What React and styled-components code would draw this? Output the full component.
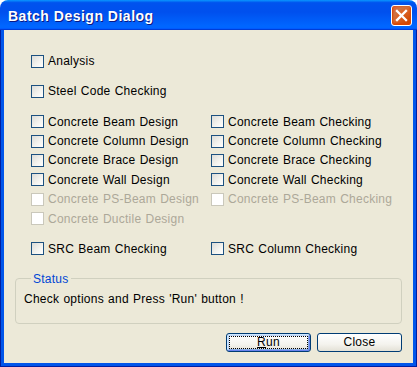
import React from "react";
import styled, { createGlobalStyle } from "styled-components";

const GlobalStyle = createGlobalStyle`
  html, body {
    margin: 0;
    padding: 0;
    background: #ffffff;
  }
  * {
    box-sizing: border-box;
  }
`;

// left and right columns of the concrete group
const designItems = [
  { label: "Concrete Beam Design" },
  { label: "Concrete Column Design" },
  { label: "Concrete Brace Design" },
  { label: "Concrete Wall Design" },
  { label: "Concrete PS-Beam Design", disabled: true },
  { label: "Concrete Ductile Design", disabled: true },
];

const checkItems = [
  { label: "Concrete Beam Checking" },
  { label: "Concrete Column Checking" },
  { label: "Concrete Brace Checking" },
  { label: "Concrete Wall Checking" },
  { label: "Concrete PS-Beam Checking", disabled: true },
];

const CheckRow = ({ label, disabled, height }) => (
  <Row $height={height} $disabled={disabled}>
    <Box $disabled={disabled} />
    <span>{label}</span>
  </Row>
);

const App = () => {
  return (
    <>
      <GlobalStyle />
      <Window>
        <TitleBar>
          <Title>Batch Design Dialog</Title>
          <CloseButton aria-label='close'>
            <svg width='15' height='15' viewBox='0 0 15 15'>
              <path
                d='M3 3 L12 12 M12 3 L3 12'
                stroke='#ffffff'
                strokeWidth='2.3'
                strokeLinecap='square'
              />
            </svg>
          </CloseButton>
        </TitleBar>
        <Frame>
          <Panel>
            <Checks>
              <CheckRow label='Analysis' />
              <Spacer $h={10} />
              <CheckRow label='Steel Code Checking' />
              <Spacer $h={11} />
              <ConcreteGrid>
                <Column>
                  {designItems.map((item, index) => (
                    <CheckRow key={index} {...item} height={19.4} />
                  ))}
                </Column>
                <Column>
                  {checkItems.map((item, index) => (
                    <CheckRow key={index} {...item} height={19.4} />
                  ))}
                </Column>
              </ConcreteGrid>
              <Spacer $h={10.6} />
              <ConcreteGrid>
                <CheckRow label='SRC Beam Checking' />
                <CheckRow label='SRC Column Checking' />
              </ConcreteGrid>
            </Checks>
            <StatusGroup>
              <legend>Status</legend>
              <StatusText>Check options and Press 'Run' button !</StatusText>
            </StatusGroup>
            <ButtonBar>
              <PushButton $focused>
                <span>
                  <u>R</u>un
                </span>
              </PushButton>
              <PushButton>
                <span>Close</span>
              </PushButton>
            </ButtonBar>
          </Panel>
        </Frame>
      </Window>
    </>
  );
};

export default App;

const Window = styled.div`
  width: 417px;
  height: 367px;
  display: flex;
  flex-direction: column;
  border-radius: 8px 8px 0 0;
  overflow: hidden;
  font-family: "Liberation Sans", Arial, sans-serif;
`;

const TitleBar = styled.div`
  height: 30px;
  flex: none;
  display: flex;
  align-items: center;
  justify-content: space-between;
  padding: 0 5px 0 8px;
  background: linear-gradient(
    180deg,
    #0997ff 0%,
    #0053ee 9%,
    #0050ee 40%,
    #0066ff 86%,
    #0066ff 92%,
    #005bff 95%,
    #003dd7 97%,
    #003dd7 100%
  );
`;

const Title = styled.div`
  color: #ffffff;
  font-weight: bold;
  font-size: 14px;
  letter-spacing: 0.5px;
  text-shadow: 1px 1px #0a1883;
  padding-top: 1px;
`;

const CloseButton = styled.div`
  width: 21px;
  height: 21px;
  border: 1px solid #ffffff;
  border-radius: 3px;
  display: flex;
  align-items: center;
  justify-content: center;
  background: radial-gradient(
    circle at 90% 90%,
    #cc4600 0%,
    #dc6527 55%,
    #cd7546 70%,
    #e35a34 100%
  );
  box-shadow: inset 0 -1px 2px 1px #da4600;
`;

const Frame = styled.div`
  flex: 1;
  display: flex;
  padding: 0 4px 4px;
  background: #0055ea;
  box-shadow: inset 1px 0 #001ea0, inset -1px 0 #001ea0, inset 0 -1px #001ea0;
`;

const Panel = styled.div`
  flex: 1;
  display: flex;
  flex-direction: column;
  background: #ece9d8;
  font-size: 12px;
  letter-spacing: 0.25px;
  word-spacing: 0.6px;
`;

const Checks = styled.div`
  padding: 21px 0 0 27px;
  display: flex;
  flex-direction: column;
`;

const Spacer = styled.div`
  height: ${(p) => p.$h}px;
`;

const ConcreteGrid = styled.div`
  display: grid;
  grid-template-columns: 180px 1fr;
`;

const Column = styled.div`
  display: flex;
  flex-direction: column;
`;

const Row = styled.div`
  height: ${(p) => p.$height || 20}px;
  display: flex;
  align-items: center;
  gap: 4px;
  color: ${(p) => (p.$disabled ? "#aca899" : "#000000")};
  white-space: nowrap;
`;

const Box = styled.div`
  width: 13px;
  height: 13px;
  flex: none;
  border: 1px solid ${(p) => (p.$disabled ? "#cac8bb" : "#1c5180")};
  background: ${(p) =>
    p.$disabled
      ? "#ffffff"
      : "linear-gradient(135deg, #dcdcd7 0%, #f4f4f0 60%, #ffffff 100%)"};
`;

const StatusGroup = styled.fieldset`
  margin: 13px 11px 0;
  padding: 0 8px;
  height: 52px;
  border: 1px solid #d0d0bf;
  border-radius: 4px;

  legend {
    color: #0046d5;
    padding: 0 2px;
    margin-left: 7px;
  }
`;

const StatusText = styled.div`
  color: #000000;
  padding-top: 6px;
`;

const ButtonBar = styled.div`
  display: flex;
  justify-content: flex-end;
  gap: 6px;
  padding: 9px 11px 0 0;
`;

const PushButton = styled.div`
  width: 85px;
  height: 19px;
  border: 1px solid #003c74;
  border-radius: 3px;
  display: flex;
  align-items: stretch;
  padding: 2px;
  color: #000000;
  background: linear-gradient(180deg, #ffffff 0%, #f4f3ee 60%, #e3e1d6 100%);
  box-shadow: ${(p) =>
    p.$focused
      ? "inset 1px 1px #cee7ff, inset -1px -1px #6982ee, inset 2px 2px #bcd4f6, inset -2px -2px #89ade4"
      : "none"};

  span {
    flex: 1;
    display: flex;
    align-items: center;
    justify-content: center;
    border: 1px ${(p) => (p.$focused ? "dotted #000000" : "solid transparent")};
  }
`;
